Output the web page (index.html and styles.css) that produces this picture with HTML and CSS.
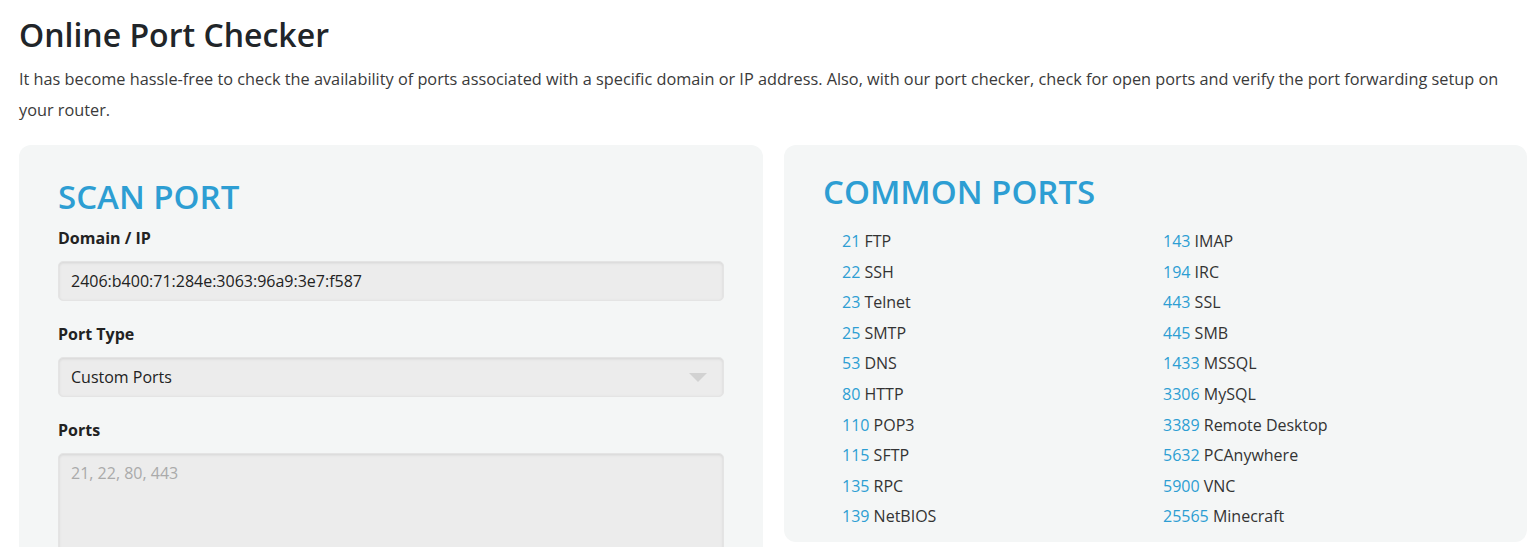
FILE: index.html
```html
<!DOCTYPE html>
<html lang="en">
<head>
<meta charset="utf-8">
<title>Online Port Checker</title>
<link rel="stylesheet" href="styles.css">
</head>
<body>
<main class="page">
  <h1 class="title">Online Port Checker</h1>
  <p class="intro">It has become hassle-free to check the availability of ports associated with a specific domain or IP address. Also, with our port checker, check for open ports and verify the port forwarding setup on your router.</p>
  <div class="cards">
    <section class="card scan">
      <h2 class="card-title">SCAN PORT</h2>
      <label class="field-label">Domain / IP</label>
      <div class="field">2406:b400:71:284e:3063:96a9:3e7:f587</div>
      <label class="field-label">Port Type</label>
      <div class="field select">
        <span>Custom Ports</span>
        <svg class="caret" width="18" height="9" viewBox="0 0 18 9"><path d="M0 0H18L9 9Z" fill="#d2d2d2"/></svg>
      </div>
      <label class="field-label">Ports</label>
      <div class="field area"><span class="placeholder">21, 22, 80, 443</span></div>
    </section>
    <section class="card common">
      <h2 class="card-title">COMMON PORTS</h2>
      <ul class="ports">
        <li><span class="num">21</span> FTP</li>
        <li><span class="num">143</span> IMAP</li>
        <li><span class="num">22</span> SSH</li>
        <li><span class="num">194</span> IRC</li>
        <li><span class="num">23</span> Telnet</li>
        <li><span class="num">443</span> SSL</li>
        <li><span class="num">25</span> SMTP</li>
        <li><span class="num">445</span> SMB</li>
        <li><span class="num">53</span> DNS</li>
        <li><span class="num">1433</span> MSSQL</li>
        <li><span class="num">80</span> HTTP</li>
        <li><span class="num">3306</span> MySQL</li>
        <li><span class="num">110</span> POP3</li>
        <li><span class="num">3389</span> Remote Desktop</li>
        <li><span class="num">115</span> SFTP</li>
        <li><span class="num">5632</span> PCAnywhere</li>
        <li><span class="num">135</span> RPC</li>
        <li><span class="num">5900</span> VNC</li>
        <li><span class="num">139</span> NetBIOS</li>
        <li><span class="num">25565</span> Minecraft</li>
      </ul>
    </section>
  </div>
</main>
</body>
</html>
```
FILE: styles.css
```css
* { box-sizing: border-box; }
html, body { margin: 0; padding: 0; background: #fff; }
body {
  font-family: "Open Sans", "Noto Sans", sans-serif;
  color: #333;
  font-size: 16px;
}
.page { padding: 14px 9px 0 19px; }
.title {
  margin: 0;
  font-size: 32px;
  font-weight: 600;
  color: #212529;
  line-height: 42px;
}
.intro {
  margin: 8px 0 0;
  font-size: 16.3px;
  line-height: 31px;
  color: #3a3a3a;
}
.cards {
  display: grid;
  grid-template-columns: 744px 743px;
  gap: 21px;
  margin-top: 19px;
  align-items: start;
}
.card {
  background: #f4f6f6;
  border-radius: 12px;
  padding: 30px 39px 10px;
}
.scan { height: 420px; }
.common { padding-top: 25px; }
.card-title {
  margin: 0;
  font-size: 33px;
  font-weight: 600;
  color: #2d9ed3;
  line-height: 44px;
}
.field-label {
  display: block;
  font-weight: 700;
  font-size: 16px;
  color: #222;
  line-height: 22px;
  margin: 8px 0 12px;
}
.field {
  height: 40px;
  background: #ececec;
  border: 1px solid #e4e4e4;
  border-radius: 5px;
  box-shadow: inset 0 1px 3px rgba(0,0,0,0.10);
  padding: 0 12px;
  display: flex;
  align-items: center;
  font-size: 16px;
  color: #222;
  margin-bottom: 22px;
}
.select { justify-content: space-between; }
.caret { margin-right: 4px; }
.area { height: 120px; align-items: flex-start; padding-top: 8px; }
.placeholder { color: #aaa; }
.ports {
  list-style: none;
  margin: 12px 0 0;
  padding: 0 0 0 19px;
  display: grid;
  grid-template-columns: 321px 1fr;
  font-size: 16px;
  line-height: 30.6px;
}
.num { color: #2d9ed3; }
```
